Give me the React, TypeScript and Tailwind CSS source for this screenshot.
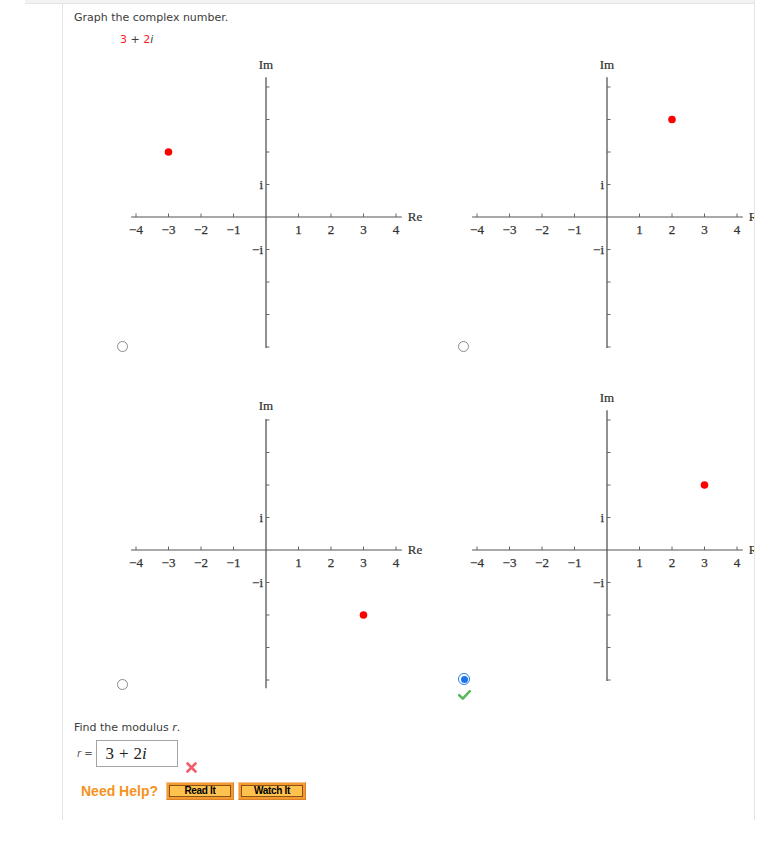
import React from "react";

const U = 32.5;
const OX = 136;
const OY = 162;
const TICKS = [-4, -3, -2, -1, 1, 2, 3, 4];

interface GraphProps {
  dot: [number, number];
  top?: number;
  bottom?: number;
  imY?: number;
}

function Graph({ dot, top = 4.3, bottom = 4.03, imY = 152 }: GraphProps) {
  const serif = { fontFamily: '"Liberation Serif", "DejaVu Serif", serif' };
  return (
    <svg width={296} height={302} className="block shrink-0 overflow-visible" style={serif}>
      <line x1={OX - 4.15 * U} y1={OY} x2={OX + 4.18 * U} y2={OY} stroke="#8c8c8c" strokeWidth={1.6} />
      <line x1={OX} y1={OY - top * U} x2={OX} y2={OY + bottom * U} stroke="#555" strokeWidth={1.3} />
      {TICKS.map((v) => (
        <line key={"x" + v} x1={OX + v * U} x2={OX + v * U} y1={OY - 3.5} y2={OY} stroke="#666" strokeWidth={1} />
      ))}
      {TICKS.map((v) => (
        <line key={"y" + v} x1={OX} x2={OX + 3.5} y1={OY - v * U} y2={OY - v * U} stroke="#666" strokeWidth={1} />
      ))}
      <g fill="#333" stroke="#333" strokeWidth={0.25} fontSize={13}>
        {TICKS.map((v) => (
          <text key={"l" + v} x={OX + v * U} y={OY + 17} textAnchor="middle">
            {v < 0 ? "\u2212" + -v : v}
          </text>
        ))}
        <text x={OX - 3} y={OY - U + 4} textAnchor="end">
          i
        </text>
        <text x={OX - 3} y={OY + U + 4} textAnchor="end">
          {"\u2212i"}
        </text>
      </g>
      <g fill="#2e2e2e" stroke="#2e2e2e" strokeWidth={0.2} fontSize={13}>
        <text x={OX} y={OY - imY + 4} textAnchor="middle">
          Im
        </text>
        <text x={OX + 4.18 * U + 6} y={OY + 4}>
          Re
        </text>
      </g>
      <circle cx={OX + dot[0] * U} cy={OY - dot[1] * U} r={3.8} fill="#ff0000" />
    </svg>
  );
}

function Radio({ checked = false }: { checked?: boolean }) {
  if (checked) {
    return (
      <div className="flex h-[12px] w-[12px] items-center justify-center rounded-full border-[1.5px] border-[#2b7de9] bg-white">
        <div className="h-[7px] w-[7px] rounded-full bg-[#1a73e8]" />
      </div>
    );
  }
  return <div className="h-[11px] w-[11px] rounded-full border border-[#8a8a8a] bg-white" />;
}

function Check() {
  return (
    <svg width={13} height={10} viewBox="0 0 13 10" className="block">
      <path d="M1.2 5.2 L4.8 8.6 L11.8 1.2" fill="none" stroke="#5cb85c" strokeWidth={2.6} strokeLinecap="round" strokeLinejoin="round" />
    </svg>
  );
}

function Cross() {
  return (
    <svg width={11} height={11} viewBox="0 0 11 11" className="block">
      <path d="M1.5 1.5 L9.5 9.5 M9.5 1.5 L1.5 9.5" stroke="#f0606c" strokeWidth={2.6} strokeLinecap="round" />
    </svg>
  );
}

function HelpButton({ label }: { label: string }) {
  return (
    <div className="h-[18px] w-[68px] border border-t-[#f5c390] border-l-[#f5c390] border-r-[#d8842a] border-b-[#d8842a] bg-[#f49a30] p-[2px]">
      <div
        className="flex h-full items-center justify-center border border-[#8a5514] bg-[#ffc24e] text-[10px] font-bold leading-none tracking-[-0.3px] text-black"
        style={{ fontFamily: '"Liberation Sans", Arial, sans-serif' }}
      >
        {label}
      </div>
    </div>
  );
}

export default function App() {
  return (
    <div className="min-h-[859px] bg-white" style={{ fontFamily: '"DejaVu Sans", Verdana, sans-serif' }}>
      <div className="ml-[25px] h-[4px] w-[730px] border-b border-r border-[#e4e4e4] bg-[#f3f3f3]" />
      <div className="ml-[62px] h-[816px] w-[693px] overflow-hidden border-x border-[#e4e4e4] px-[11px] pt-[7px] text-[#3c3c3c]">
        <p className="text-[11px] leading-[14px]">Graph the complex number.</p>
        <p className="ml-[46px] mt-[8px] text-[11px] leading-[14px]">
          <span className="text-[#ff1a1a]">3</span> + <span className="text-[#ff1a1a]">2</span>
          <span className="italic">i</span>
        </p>

        <div className="ml-[43px] mt-[8px] grid grid-cols-[341px_341px]">
          <div className="flex h-[333px]">
            <div className="w-[13px] shrink-0 pt-[286px]">
              <Radio />
            </div>
            <Graph dot={[-3, 2]} />
          </div>
          <div className="flex h-[333px]">
            <div className="w-[13px] shrink-0 pt-[286px]">
              <Radio />
            </div>
            <Graph dot={[2, 3]} />
          </div>
          <div className="flex h-[333px]">
            <div className="w-[13px] shrink-0 pt-[291px]">
              <Radio />
            </div>
            <Graph dot={[3, -2]} top={4.03} bottom={4.25} imY={144} />
          </div>
          <div className="flex h-[333px]">
            <div className="w-[13px] shrink-0 pt-[285px]">
              <Radio checked />
              <div className="mt-[5px]">
                <Check />
              </div>
            </div>
            <Graph dot={[3, 2]} />
          </div>
        </div>

        <p className="text-[11px] leading-[14px]">
          Find the modulus <span className="italic">r</span>.
        </p>
        <div className="mt-[5px] flex items-end">
          <div className="ml-[3px] flex h-[27px] items-center text-[10px] text-[#555]">
            <span className="italic">r</span>
            <span className="ml-[3px]">=</span>
          </div>
          <div
            className="ml-[3px] flex h-[27px] w-[82px] items-center border border-[#a5a5a5] pl-[9px] text-[17px] text-[#222]"
            style={{ fontFamily: '"Liberation Serif", "DejaVu Serif", serif' }}
          >
            3<span className="mx-[5px]">+</span>2<span className="italic">i</span>
          </div>
          <div className="relative top-[6px] ml-[8px]">
            <Cross />
          </div>
        </div>

        <div className="ml-[7px] mt-[15px] flex h-[18px] items-center">
          <span
            className="mr-[8px] text-[14px] font-bold leading-none text-[#f5921e]"
            style={{ fontFamily: '"Liberation Sans", Arial, sans-serif' }}
          >
            Need Help?
          </span>
          <HelpButton label="Read It" />
          <div className="w-[4px]" />
          <HelpButton label="Watch It" />
        </div>
      </div>
    </div>
  );
}
